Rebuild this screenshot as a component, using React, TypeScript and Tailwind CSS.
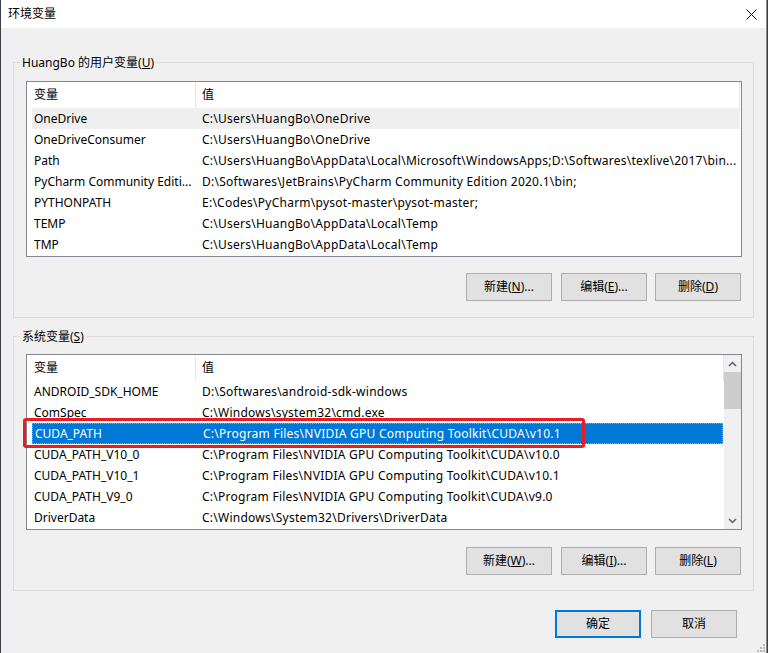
import type { ReactNode } from 'react'

const userVars = [
  ['OneDrive', 'C:\\Users\\HuangBo\\OneDrive'],
  ['OneDriveConsumer', 'C:\\Users\\HuangBo\\OneDrive'],
  ['Path', 'C:\\Users\\HuangBo\\AppData\\Local\\Microsoft\\WindowsApps;D:\\Softwares\\texlive\\2017\\bin...'],
  ['PyCharm Community Editi...', 'D:\\Softwares\\JetBrains\\PyCharm Community Edition 2020.1\\bin;'],
  ['PYTHONPATH', 'E:\\Codes\\PyCharm\\pysot-master\\pysot-master;'],
  ['TEMP', 'C:\\Users\\HuangBo\\AppData\\Local\\Temp'],
  ['TMP', 'C:\\Users\\HuangBo\\AppData\\Local\\Temp'],
]

const sysVars = [
  ['ANDROID_SDK_HOME', 'D:\\Softwares\\android-sdk-windows'],
  ['ComSpec', 'C:\\Windows\\system32\\cmd.exe'],
  ['CUDA_PATH', 'C:\\Program Files\\NVIDIA GPU Computing Toolkit\\CUDA\\v10.1'],
  ['CUDA_PATH_V10_0', 'C:\\Program Files\\NVIDIA GPU Computing Toolkit\\CUDA\\v10.0'],
  ['CUDA_PATH_V10_1', 'C:\\Program Files\\NVIDIA GPU Computing Toolkit\\CUDA\\v10.1'],
  ['CUDA_PATH_V9_0', 'C:\\Program Files\\NVIDIA GPU Computing Toolkit\\CUDA\\v9.0'],
  ['DriverData', 'C:\\Windows\\System32\\Drivers\\DriverData'],
]

function Btn({ children, primary, className = '' }: { children: ReactNode; primary?: boolean; className?: string }) {
  return (
    <button
      className={`flex h-[28px] w-[86px] items-center justify-center bg-[#e1e1e1] text-[12px] text-black ${
        primary ? 'border-2 border-[#0078d7]' : 'border border-[#adadad]'
      } ${className}`}
    >
      {children}
    </button>
  )
}

function Header({ scroll }: { scroll?: boolean }) {
  return (
    <div className={`ml-[5px] flex h-[26px] items-center bg-white ${scroll ? '' : 'mr-[1px]'}`}>
      <div className="h-full w-[164px] border-r border-[#e5e5e5] pl-[2px] leading-[26px]">变量</div>
      <div className="h-full flex-1 border-r border-[#e5e5e5] pl-[6px] leading-[26px]">值</div>
    </div>
  )
}

function Row({ name, value, state }: { name: string; value: string; state?: 'hover' | 'selected' }) {
  const bg =
    state === 'selected'
      ? 'bg-[#0078d7] text-white border border-dotted border-[#e0a050]'
      : state === 'hover'
        ? 'bg-[#efefef]'
        : ''
  return (
    <div className={`ml-[5px] mr-[1px] flex h-[21px] items-center whitespace-nowrap ${bg}`}>
      <div className="w-[164px] pl-[2px] leading-[21px]">{name}</div>
      <div className="flex-1 overflow-hidden pl-[6px] leading-[21px] tracking-[0.25px]">{value}</div>
    </div>
  )
}

function Chevron({ down }: { down?: boolean }) {
  return (
    <div className="flex h-[17px] w-[17px] items-center justify-center">
      <svg width="9" height="6" viewBox="0 0 9 6">
        <path
          d={down ? 'M1 1 L4.5 4.5 L8 1' : 'M1 5 L4.5 1.5 L8 5'}
          fill="none"
          stroke="#606060"
          strokeWidth="1.5"
        />
      </svg>
    </div>
  )
}

function GroupLabel({ children }: { children: ReactNode }) {
  return <div className="-mt-[8px] ml-[6px] h-[16px] w-fit bg-[#f0f0f0] px-[2px] leading-[16px]">{children}</div>
}

export default function App() {
  return (
    <div className="flex h-[653px] w-[768px] bg-[#3b3f45] font-['Noto_Sans','Noto_Sans_CJK_SC',sans-serif] text-[12px] text-black">
      <div className="relative ml-[1px] flex w-[766px] flex-col border-r border-[#8a8a8a] bg-[#f0f0f0]">
        {/* title bar */}
        <div className="flex h-[28px] items-center justify-between bg-white pl-[7px] pr-[9px]">
          <span className="text-[12px]">环境变量</span>
          <svg width="11" height="11" viewBox="0 0 11 11">
            <path d="M0.5 0.5 L10.5 10.5 M10.5 0.5 L0.5 10.5" stroke="#000" strokeWidth="1" />
          </svg>
        </div>

        {/* user variables */}
        <div className="ml-[12px] mt-[34px] w-[741px] border border-[#dcdcdc] pb-[16px]">
          <GroupLabel>
            HuangBo 的用户变量(<span className="underline">U</span>)
          </GroupLabel>
          <div className="ml-[12px] mt-[10px] h-[176px] w-[716px] border border-[#828790] bg-white">
            <Header />
            {userVars.map(([n, v], i) => (
              <Row key={n} name={n} value={v} state={i === 0 ? 'hover' : undefined} />
            ))}
          </div>
          <div className="mt-[16px] flex w-[727px] justify-end">
            <Btn>
              新建(<span className="underline">N</span>)...
            </Btn>
            <Btn className="ml-[9px]">
              编辑(<span className="underline">E</span>)...
            </Btn>
            <Btn className="ml-[8px]">
              删除(<span className="underline">D</span>)
            </Btn>
          </div>
        </div>

        {/* system variables */}
        <div className="ml-[12px] mt-[18px] w-[741px] border border-[#dcdcdc] pb-[15px]">
          <GroupLabel>
            系统变量(<span className="underline">S</span>)
          </GroupLabel>
          <div className="relative ml-[12px] mt-[9px] flex h-[176px] w-[716px] border border-[#828790] bg-white">
            <div className="flex-1">
              <Header scroll />
              {sysVars.map(([n, v], i) => (
                <Row key={n} name={n} value={v} state={i === 2 ? 'selected' : undefined} />
              ))}
            </div>
            <div className="flex w-[17px] flex-col bg-[#f0f0f0]">
              <Chevron />
              <div className="h-[37px] bg-[#cdcdcd]" />
              <div className="flex-1" />
              <Chevron down />
            </div>
            {/* red annotation */}
            <div className="pointer-events-none absolute left-[-4px] top-[63px] h-[30px] w-[562px] rounded-[3px] border-[3px] border-[#ec1c24]" />
          </div>
          <div className="mt-[17px] flex w-[727px] justify-end">
            <Btn>
              新建(<span className="underline">W</span>)...
            </Btn>
            <Btn className="ml-[9px]">
              编辑(<span className="underline">I</span>)...
            </Btn>
            <Btn className="ml-[8px]">
              删除(<span className="underline">L</span>)
            </Btn>
          </div>
        </div>

        {/* dialog buttons */}
        <div className="mt-[19px] flex justify-end pr-[29px]">
          <Btn primary className="h-[27px]">确定</Btn>
          <Btn className="ml-[10px] h-[27px]">取消</Btn>
        </div>

        {/* resize grip */}
        <svg className="absolute bottom-[1px] right-[1px]" width="10" height="10" viewBox="0 0 10 10">
          {[
            [8, 0], [8, 3], [5, 3], [8, 6], [5, 6], [2, 6],
          ].map(([x, y]) => (
            <rect key={`${x}-${y}`} x={x} y={y + 2} width="2" height="2" fill="#b8b8b8" />
          ))}
        </svg>
      </div>
    </div>
  )
}
